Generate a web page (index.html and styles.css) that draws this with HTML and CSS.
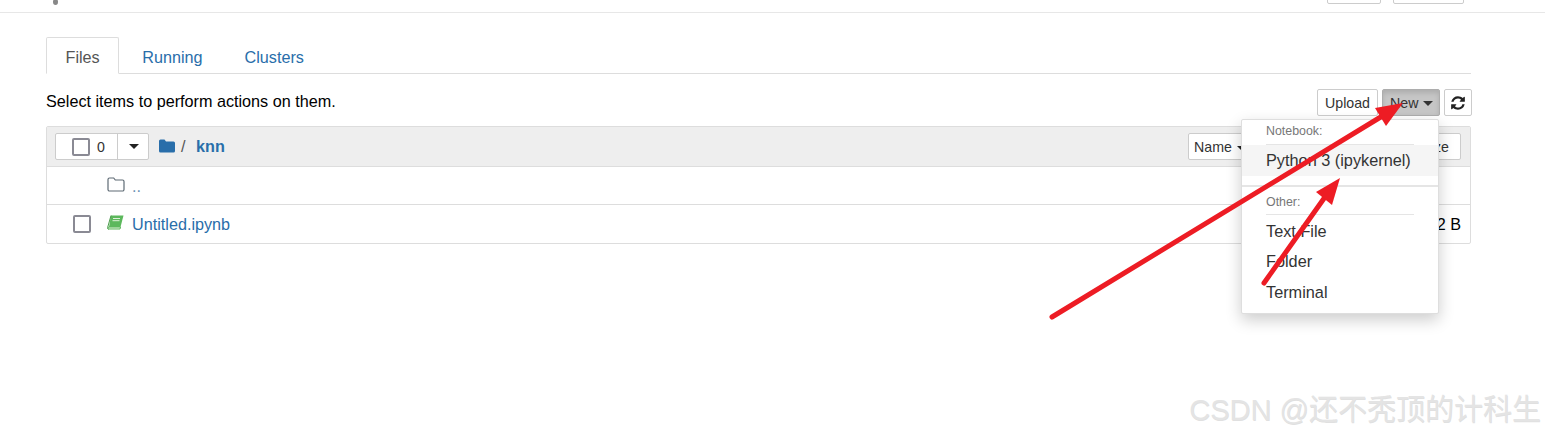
FILE: index.html
```html
<!DOCTYPE html>
<html lang="en">
<head>
    <meta charset="UTF-8">
    <title>Home Page</title>
    <link rel="stylesheet" href="styles.css">
</head>
<body>
    <header class="top-bar">
        <span class="logo-dot"></span>
        <div class="top-buttons">
            <span class="top-btn top-btn-quit"></span>
            <span class="top-btn top-btn-logout"></span>
        </div>
    </header>
    <main class="page">
        <ul class="tabs">
            <li class="tab tab-active">Files</li>
            <li class="tab">Running</li>
            <li class="tab">Clusters</li>
        </ul>
        <div class="toolbar">
            <span class="toolbar-text">Select items to perform actions on them.</span>
            <div class="toolbar-buttons">
                <button class="btn">Upload</button>
                <button class="btn btn-new">New <span class="caret"></span></button>
                <button class="btn btn-refresh">
                    <svg class="refresh-icon" viewBox="0 0 1792 1792"><path d="M1639 1056q0 5-1 7-64 268-268 434.5t-478 166.5q-146 0-282.5-55t-243.5-157l-129 129q-19 19-45 19t-45-19-19-45v-448q0-26 19-45t45-19h448q26 0 45 19t19 45-19 45l-137 137q71 66 161 102t187 36q134 0 250-65t186-179q11-17 53-117 8-23 30-23h192q13 0 22.5 9.5t9.5 22.5zm25-800v448q0 26-19 45t-45 19h-448q-26 0-45-19t-19-45 19-45l138-138q-148-137-349-137-134 0-250 65t-186 179q-11 17-53 117-8 23-30 23h-199q-13 0-22.5-9.5t-9.5-22.5v-7q65-268 270-434.5t480-166.5q146 0 284 55.5t245 156.5l130-129q19-19 45-19t45 19 19 45z"/></svg>
                </button>
            </div>
        </div>
        <section class="file-list">
            <div class="list-head">
                <div class="select-group">
                    <div class="select-count"><span class="checkbox"></span><span>0</span></div>
                    <div class="select-caret"><span class="caret caret-dark"></span></div>
                </div>
                <svg class="folder-solid" viewBox="0 0 16 14"><path d="M1.5 0.5h4l1.5 2h7.5a1.5 1.5 0 0 1 1.5 1.5v8a1.5 1.5 0 0 1-1.5 1.5h-13a1.5 1.5 0 0 1-1.5-1.5v-10a1.5 1.5 0 0 1 1.5-1.5z"/></svg>
                <span class="crumb-sep">/</span>
                <a class="crumb">knn</a>
                <div class="sort-buttons">
                    <span class="sort-btn sort-name">Name <span class="caret caret-dark"></span></span>
                    <span class="sort-btn sort-size">Size</span>
                </div>
            </div>
            <div class="list-row row-up">
                <svg class="folder-outline" viewBox="0 0 18 15"><path d="M2.5 1h4.2l1.6 2h7.2a1.5 1.5 0 0 1 1.5 1.5v8a1.5 1.5 0 0 1-1.5 1.5h-13a1.5 1.5 0 0 1-1.5-1.5v-10a1.5 1.5 0 0 1 1.5-1.5z"/></svg>
                <a class="file-link file-link-up">..</a>
            </div>
            <div class="list-row row-file">
                <span class="checkbox checkbox-row"></span>
                <svg class="book-icon" viewBox="0 0 17 15"><path class="book-cover" d="M4 0.5h12.5l-3 11.5h-11.5z"/><path class="book-pages" d="M2 12h11.5l-0.5 2h-11.5c-1-0.3-0.8-1.6 0.5-2z"/><path class="book-edge" d="M4 0.5l-3.3 11.8c-0.2 1 0.2 1.9 0.8 2.2"/><path class="book-lines" d="M6 3.5h7M5.5 5.7h7"/></svg>
                <a class="file-link">Untitled.ipynb</a>
                <span class="file-size">2 B</span>
            </div>
        </section>
    </main>

    <div class="new-menu">
        <div class="menu-label">Notebook:</div>
        <div class="menu-item menu-item-hover">Python 3 (ipykernel)</div>
        <div class="menu-divider"></div>
        <div class="menu-label menu-label-other">Other:</div>
        <div class="menu-item">Text File</div>
        <div class="menu-item">Folder</div>
        <div class="menu-item">Terminal</div>
    </div>

    <svg class="arrows" width="1545" height="437" viewBox="0 0 1545 437">
        <line x1="1052" y1="317" x2="1384" y2="115"/>
        <polygon points="1403,103 1375,108 1386,126"/>
        <line x1="1264" y1="283" x2="1325" y2="197"/>
        <polygon points="1340,178 1316,192 1332,205"/>
    </svg>

    <div class="watermark">CSDN @还不秃顶的计科生</div>
</body>
</html>
```

FILE: styles.css
```css
html, body {
    margin: 0;
    padding: 0;
    height: 437px;
    overflow: hidden;
}
body {
    font-family: "Liberation Sans", Arial, sans-serif;
    font-size: 16.2px;
    color: #000;
    background: #fff;
    position: relative;
}
a {
    color: #296eaa;
}

/* top bar, cut off by the screenshot */
.top-bar {
    height: 12px;
    border-bottom: 1px solid #e7e7e7;
    display: flex;
    justify-content: space-between;
    align-items: flex-end;
    overflow: hidden;
    padding: 0 81px 0 53px;
}
.logo-dot {
    width: 5px;
    height: 6px;
    border-radius: 50%;
    background: #888;
    margin-bottom: 7px;
}
.top-buttons {
    display: flex;
    gap: 12px;
    margin-bottom: 8px;
}
.top-btn {
    display: block;
    height: 20px;
    border: 1px solid #ccc;
    border-radius: 2px;
    box-sizing: border-box;
}
.top-btn-quit {
    width: 54px;
}
.top-btn-logout {
    width: 71px;
}

.page {
    width: 1425px;
    margin-left: 46px;
}

/* tabs */
.tabs {
    list-style: none;
    margin: 24px 0 0;
    padding: 0;
    display: flex;
    height: 36px;
    border-bottom: 1px solid #ddd;
}
.tab {
    padding: 0 18px;
    margin-right: 4px;
    line-height: 38px;
    color: #296eaa;
    box-sizing: border-box;
    height: 37px;
    border: 1px solid transparent;
}
.tab-active {
    color: #555;
    background: #fff;
    border: 1px solid #ddd;
    border-bottom-color: #fff;
    border-radius: 2px 2px 0 0;
    line-height: 38px;
    padding: 0 18.5px;
}

/* toolbar */
.toolbar {
    display: flex;
    justify-content: space-between;
    align-items: flex-start;
    height: 52px;
    margin-right: -1px;
}
.toolbar-text {
    margin-top: 18px;
    line-height: 18px;
}
.toolbar-buttons {
    display: flex;
    gap: 4px;
    margin-top: 15px;
}
.btn {
    font: 14.2px "Liberation Sans", Arial, sans-serif;
    color: #333;
    height: 27px;
    padding: 0 7px;
    background: #fff;
    border: 1px solid #ccc;
    border-radius: 2px;
    box-sizing: border-box;
}
.btn-new {
    width: 58px;
    padding: 0 0 0 7px;
    text-align: left;
    background: #c6c6c6;
    border-color: #adadad;
    box-shadow: inset 0 3px 5px rgba(0, 0, 0, .125);
}
.btn-refresh {
    width: 28px;
    padding: 0;
    display: flex;
    align-items: center;
    justify-content: center;
}
.refresh-icon {
    width: 16px;
    height: 16px;
    fill: #222;
}
.caret {
    display: inline-block;
    width: 0;
    height: 0;
    margin-left: 1px;
    vertical-align: middle;
    border-top: 5px solid #333;
    border-left: 5px solid transparent;
    border-right: 5px solid transparent;
}
.caret-dark {
    border-top-color: #222;
}

/* file list */
.file-list {
    border: 1px solid #ddd;
    border-radius: 2px;
    height: 118px;
    box-sizing: border-box;
}
.list-head {
    height: 40px;
    background: #eee;
    border-bottom: 1px solid #ddd;
    box-sizing: border-box;
    display: flex;
    align-items: center;
    padding: 0 9px 0 8px;
}
.select-group {
    display: flex;
    height: 27px;
    width: 94px;
    background: #fff;
    border: 1px solid #ccc;
    border-radius: 2px;
    box-sizing: border-box;
    margin-right: 10px;
}
.select-count {
    width: 62px;
    display: flex;
    align-items: center;
    justify-content: flex-end;
    gap: 7px;
    padding-right: 12px;
    box-sizing: border-box;
    border-right: 1px solid #ccc;
    font-size: 14.2px;
    color: #333;
}
.select-caret {
    flex: 1;
    display: flex;
    align-items: center;
    justify-content: center;
}
.checkbox {
    display: block;
    width: 18px;
    height: 18px;
    background: #fff;
    border: 2px solid #8a8a94;
    border-radius: 2px;
    box-sizing: border-box;
}
.folder-solid {
    width: 16px;
    height: 14px;
    fill: #296eaa;
    margin-top: -2px;
}
.crumb-sep {
    margin-left: 6px;
    color: #555;
    width: 15px;
}
.crumb {
    font-weight: bold;
}
.sort-buttons {
    margin-left: auto;
    display: flex;
    justify-content: space-between;
    width: 273px;
}
.sort-btn {
    display: block;
    height: 27px;
    line-height: 26px;
    padding: 0 5px;
    font-size: 14.2px;
    color: #333;
    background: #fff;
    border: 1px solid #ccc;
    border-radius: 2px;
    box-sizing: border-box;
}
.sort-size {
    padding: 0 11px 0 8px;
}
.list-row {
    display: flex;
    align-items: center;
    box-sizing: border-box;
    position: relative;
}
.row-up {
    height: 38px;
    border-bottom: 1px solid #ddd;
    padding-left: 60px;
}
.row-file {
    height: 38px;
    padding-left: 26px;
}
.file-link {
    margin-left: 8px;
}
.file-link-up {
    margin-left: 7px;
    margin-top: 2px;
    color: #6d93b5;
}
.folder-outline {
    width: 18px;
    height: 15px;
    fill: none;
    stroke: #5e6a74;
    stroke-width: 1.2;
    margin-top: -3px;
}
.checkbox-row {
    margin-right: 16px;
}
.book-icon {
    width: 17px;
    height: 15px;
    margin-top: -3px;
}
.book-cover {
    fill: #5cb85c;
}
.book-pages {
    fill: #dff0d8;
    stroke: #5cb85c;
    stroke-width: 1;
}
.book-edge {
    fill: none;
    stroke: #4a9a4a;
    stroke-width: 1;
}
.book-lines {
    fill: none;
    stroke: #dff0d8;
    stroke-width: 1;
}
.file-size {
    margin-left: auto;
    margin-right: 9px;
}

/* dropdown over the list */
.new-menu {
    position: absolute;
    left: 1241px;
    top: 119px;
    width: 198px;
    height: 195px;
    box-sizing: border-box;
    background: #fff;
    border-radius: 2px;
    border: 1px solid #dedede;
    box-shadow: 0 6px 16px rgba(0, 0, 0, .2);
    color: #333;
    font-size: 16.3px;
}
.menu-label {
    margin: 0 24px;
    height: 25px;
    line-height: 23px;
    font-size: 12.4px;
    color: #777;
    border-bottom: 1px solid #e5e5e5;
    box-sizing: border-box;
}
.menu-item {
    padding-left: 24px;
    height: 30.5px;
    line-height: 32px;
}
.menu-item-hover {
    background: #f5f5f5;
    line-height: 31px;
}
.menu-divider {
    height: 2px;
    margin-top: 9px;
    background: #e5e5e5;
}
.menu-label-other {
    margin-top: 5px;
    height: 23px;
    line-height: 20px;
}

/* red arrows drawn over the screenshot */
.arrows {
    position: absolute;
    left: 0;
    top: 0;
    pointer-events: none;
}
.arrows line {
    stroke: #ed1c24;
    stroke-width: 5;
    stroke-linecap: round;
}
.arrows polygon {
    fill: #ed1c24;
}

.watermark {
    position: absolute;
    right: 4px;
    top: 393px;
    font-family: "Liberation Sans", "Noto Sans CJK SC", sans-serif;
    font-size: 29px;
    line-height: 34px;
    color: #e4e4e4;
    text-shadow: 0.5px 0.5px 0.5px #e0e0e0;
    white-space: nowrap;
}
```
